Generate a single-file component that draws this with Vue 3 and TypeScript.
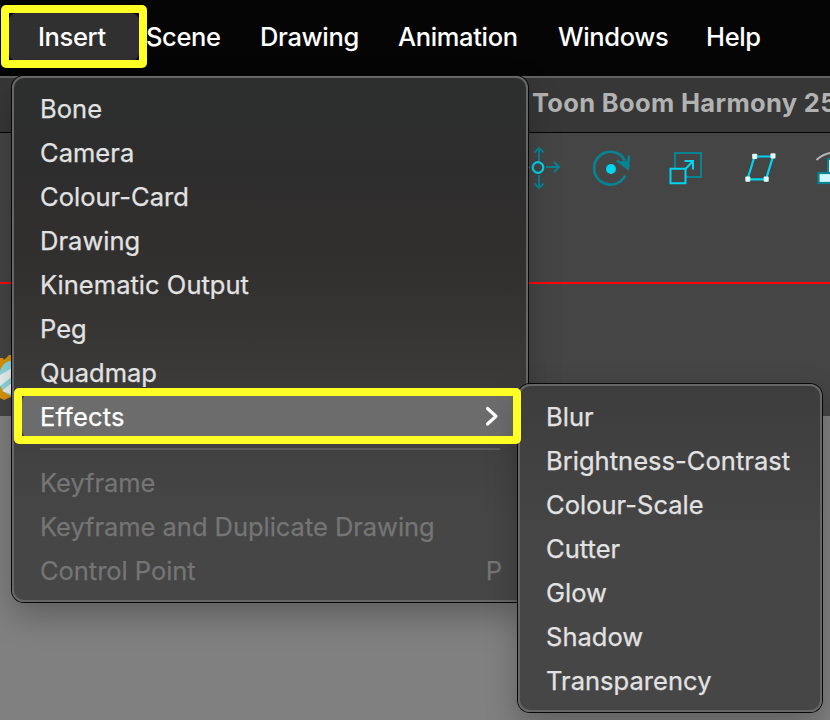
<script setup lang="ts">
interface MenuEntry {
  label: string
  shortcut?: string
  open?: boolean
}

const menuBar: { label: string; left: number }[] = [
  { label: 'Scene', left: 147 },
  { label: 'Drawing', left: 260 },
  { label: 'Animation', left: 398 },
  { label: 'Windows', left: 558 },
  { label: 'Help', left: 706 },
]

const insertItems: MenuEntry[] = [
  { label: 'Bone' },
  { label: 'Camera' },
  { label: 'Colour-Card' },
  { label: 'Drawing' },
  { label: 'Kinematic Output' },
  { label: 'Peg' },
  { label: 'Quadmap' },
  { label: 'Effects', open: true },
]

const disabledItems: MenuEntry[] = [
  { label: 'Keyframe' },
  { label: 'Keyframe and Duplicate Drawing' },
  { label: 'Control Point', shortcut: 'P' },
]

const effects: string[] = [
  'Blur',
  'Brightness-Contrast',
  'Colour-Scale',
  'Cutter',
  'Glow',
  'Shadow',
  'Transparency',
]

// Column widths run from one title's left edge to the next.
const columnWidth = (i: number): string =>
  `${(menuBar[i + 1]?.left ?? 830) - menuBar[i].left}px`
</script>

<template>
  <div class="screen">
    <nav class="menubar">
      <div class="active-title"><span>Insert</span></div>
      <div v-for="(m, i) in menuBar" :key="m.label" class="title" :style="{ width: columnWidth(i) }">
        {{ m.label }}
      </div>
    </nav>

    <main class="window">
      <header class="titlebar">Toon Boom Harmony 25</header>
      <section class="toolbar">
        <svg class="tools" width="302" height="60" viewBox="528 140 302 60" fill="none">
          <g stroke="#078391" stroke-width="2">
            <path d="M539 148v13M534.500 152.500l4.500-4.500 4.500 4.500M539 175v13M534.500 183.500l4.500 4.500 4.500-4.500M546 167h13M554 162l5 5-5 5" />
            <path d="M528 167h2" />
          </g>
          <circle cx="538" cy="167.500" r="5.300" stroke="#00d5ef" stroke-width="2.200" />
          <path d="M625.200 175.500A16.400 16.400 0 1 1 625 160.500" stroke="#078391" stroke-width="2.700" />
          <path d="M617 160.500l11 8 1-13" stroke="#078391" stroke-width="2.600" />
          <path d="M618 161.500l10.500 8v-9l-4 .5z" fill="#078391" />
          <circle cx="611" cy="169" r="5" fill="#00d5ef" />
          <path d="M675 168v-15h26v24h-15" stroke="#078391" stroke-width="2" />
          <path d="M670.500 168.800h15v14.500h-15zM685.500 169l7.500-8M684.500 161h8.500v8.500" stroke="#00d5ef" stroke-width="2" />
          <path d="M754.500 156.500h18.500l-7 22.800h-18.500z" stroke="#00d5ef" stroke-width="2.200" />
          <g fill="#dffcff">
            <rect x="752.200" y="153.700" width="5" height="5.300" rx="1" />
            <rect x="770.500" y="153.300" width="5" height="5.300" rx="1" />
            <rect x="745.300" y="176.500" width="5" height="5.300" rx="1" />
            <rect x="763.700" y="176.500" width="5" height="5.300" rx="1" />
          </g>
          <path d="M816.500 160q6-5.500 14-7" stroke="#b5b5b5" stroke-width="2" />
          <path d="M828 172v-13h5v13" fill="#dffcff" stroke="#078391" stroke-width="2" />
          <rect x="818.500" y="173" width="14" height="10" fill="#d0f7fb" stroke="#078391" stroke-width="2.200" />
        </svg>
      </section>
      <section class="timeline">
        <svg class="badge" width="24" height="50" viewBox="0 352 24 50">
          <path d="M0 358h3l1 2 5-5h8v44l-6-2-7 3-4-2z" fill="#dc9600" />
          <ellipse cx="11" cy="378" rx="12" ry="17" fill="#8edbe5" />
          <path d="M0 375l14-8v8l-14 11zM2 391l12-10v14z" fill="#eef5f5" />
        </svg>
      </section>
      <section class="canvas"></section>
    </main>

    <div class="panel insert-menu">
      <div v-for="item in insertItems" :key="item.label" class="row" :class="{ open: item.open }">
        <span>{{ item.label }}</span>
        <svg v-if="item.open" class="chevron" width="14" height="22" viewBox="0 0 14 22" fill="none">
          <path d="M2.500 3.500l8.500 7.700-8.500 7.800" stroke="#fff" stroke-width="3.200" stroke-linecap="round" stroke-linejoin="round" />
        </svg>
      </div>
      <div class="separator"></div>
      <div v-for="item in disabledItems" :key="item.label" class="row disabled">
        <span>{{ item.label }}</span>
        <span v-if="item.shortcut">{{ item.shortcut }}</span>
      </div>
    </div>

    <div class="panel effects-menu">
      <div v-for="name in effects" :key="name" class="row">{{ name }}</div>
    </div>

    <div class="highlight highlight-insert"></div>
    <div class="highlight highlight-effects"></div>
  </div>
</template>

<style>
body {
  background: #050505;
  overflow: hidden;
}
</style>

<style scoped>
.screen {
  position: relative;
  width: 830px;
  height: 720px;
  overflow: hidden;
  display: flex;
  flex-direction: column;
  font-family: Inter, "Liberation Sans", sans-serif;
  font-size: 25.5px;
  letter-spacing: 0;
  white-space: nowrap;
}
.menubar {
  height: 76px;
  flex: none;
  box-sizing: border-box;
  padding-bottom: 3px;
  display: flex;
  align-items: center;
  background: #050505;
  color: #fff;
  font-weight: 500;
  letter-spacing: -0.35px;
}
.active-title {
  width: 130px;
  height: 48px;
  margin: 0 7px 0 9px;
  border-radius: 8px;
  background: #303030;
  display: flex;
  align-items: center;
  padding-left: 29px;
  box-sizing: border-box;
}
.title {
  flex: none;
}
.title:nth-child(2) {
  margin-right: 1px;
}
.window {
  flex: 1;
  display: flex;
  flex-direction: column;
  border-top: 2px solid #626262;
}
.titlebar {
  height: 55px;
  box-sizing: border-box;
  padding-left: 532px;
  line-height: 50px;
  background: #373737;
  border-bottom: 1px solid #050505;
  color: #b2b2b2;
  font-weight: 700;
  letter-spacing: 0.33px;
}
.toolbar {
  height: 151px;
  box-sizing: border-box;
  padding: 7px 0 0 528px;
  background: #454545;
  border-bottom: 2px solid #ff0505;
}
.tools {
  display: block;
}
.timeline {
  height: 132px;
  display: flex;
  align-items: flex-end;
  background: #454545;
}
.badge {
  margin-bottom: 14px;
}
.canvas {
  flex: 1;
  background: #808080;
}
.panel {
  position: absolute;
  box-sizing: border-box;
  border: 2px solid #666;
  border-radius: 12px;
  color: #e2e2e2;
  letter-spacing: 0.03px;
  -webkit-text-stroke: 0.25px currentColor;
}
.insert-menu {
  left: 12px;
  top: 76px;
  width: 516px;
  height: 526px;
  padding-top: 8px;
  background: linear-gradient(#2d2f2f 0, #2e2d2d 90px, #32302f 190px, #383736 270px, #424242 380px, #464646 440px);
  box-shadow: 0 0 0 1px #080808, 0 14px 32px rgba(0, 0, 0, 0.26);
}
.effects-menu {
  left: 518px;
  top: 384px;
  width: 304px;
  height: 328px;
  padding-top: 8px;
  background: linear-gradient(#3d3d3d, #464646 160px);
  box-shadow: 0 0 0 1px #080808, 0 14px 32px rgba(0, 0, 0, 0.26);
}
.row {
  height: 44px;
  box-sizing: border-box;
  padding: 0 26px;
  display: flex;
  align-items: center;
  justify-content: space-between;
}
.row.open {
  margin: 0 8px;
  padding: 0 18px;
  border-radius: 8px;
  background: #6c6c6c;
  color: #fff;
  letter-spacing: 0.15px;
}
.row.disabled {
  padding-right: 24px;
  color: #757575;
  letter-spacing: -0.04px;
}
.chevron {
  margin-right: 1px;
}
.separator {
  height: 2px;
  margin: 10px 26px 10px;
  background: #5b5b5b;
}
.highlight {
  position: absolute;
  box-sizing: border-box;
  border: 8px solid #ffff26;
  border-radius: 5px;
}
.highlight-insert {
  left: 1px;
  top: 5px;
  width: 146px;
  height: 63px;
}
.highlight-effects {
  left: 14px;
  top: 388px;
  width: 507px;
  height: 56px;
}
</style>
